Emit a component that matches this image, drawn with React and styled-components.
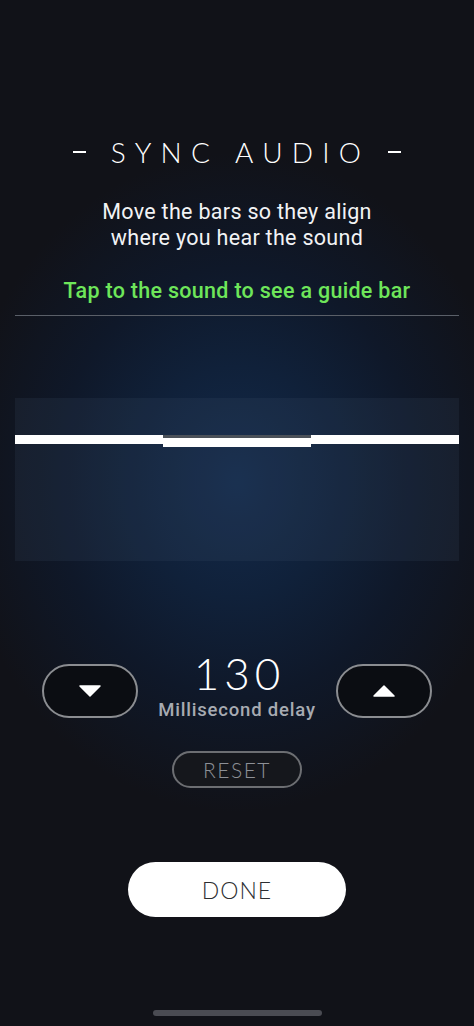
import styled, { createGlobalStyle } from 'styled-components'

const GlobalStyle = createGlobalStyle`
    html, body {
        margin: 0;
        padding: 0;
        background: #111218;
    }
    #root {
        min-height: 1026px;
    }
`

const Screen = styled.div`
    width: 474px;
    height: 1026px;
    display: flex;
    flex-direction: column;
    align-items: center;
    box-sizing: border-box;
    padding-top: 135px;
    background:
        radial-gradient(ellipse 280px 330px at 50% 47%, #132a4b 0%, #10213a 35%, #0f1829 65%, #111218 100%);
    overflow: hidden;
`
const Title = styled.h1`
    margin: 0;
    font-family: Lato, "Liberation Sans", sans-serif;
    font-weight: 300;
    font-size: 28px;
    line-height: 34px;
    letter-spacing: 0.33em;
    color: #ffffff;
    display: flex;
    align-items: center;
`
const Dash = styled.span`
    display: inline-block;
    width: 13px;
    height: 2px;
    background: #ffffff;
    margin-left: ${p => (p.$end ? '18px' : '0')};
    margin-right: ${p => (p.$end ? '0' : '25px')};
`
const Subtitle = styled.p`
    margin: 30px 0 0;
    font-family: Roboto, "Liberation Sans", sans-serif;
    font-size: 21.5px;
    line-height: 26px;
    color: #f2f3f5;
    text-align: center;
    letter-spacing: 0.3px;
`
const Hint = styled.p`
    margin: 27px 0 0;
    font-family: Roboto, "Liberation Sans", sans-serif;
    font-weight: 500;
    font-size: 21.5px;
    line-height: 26px;
    color: #6ee65a;
    letter-spacing: 0.3px;
`
const Divider = styled.div`
    width: 444px;
    height: 1px;
    margin-top: 11px;
    background: #5a5f68;
`
const Panel = styled.div`
    width: 444px;
    height: 163px;
    margin-top: 82px;
    box-sizing: border-box;
    padding-top: 37px;
    display: flex;
    align-items: flex-start;
    background: rgba(70, 90, 115, 0.16);
`
const Bar = styled.div`
    flex: 1;
    height: 9px;
    background: #ffffff;
    border-top: ${p => (p.$guide ? '3px solid #4b5159' : 'none')};
`
const Controls = styled.div`
    width: 390px;
    margin-top: 97px;
    display: flex;
    align-items: flex-start;
    justify-content: space-between;
`
const StepButton = styled.button`
    width: 96px;
    height: 54px;
    margin-top: 6px;
    border-radius: 27px;
    border: 2px solid #8b8d91;
    background: #0b0d12;
    display: flex;
    align-items: center;
    justify-content: center;
    padding: 0;
`
const Readout = styled.div`
    display: flex;
    flex-direction: column;
    align-items: center;
`
const Value = styled.div`
    margin-top: -5px;
    font-family: Lato, "Liberation Sans", sans-serif;
    font-weight: 300;
    font-size: 44px;
    line-height: 40px;
    letter-spacing: 5px;
    color: #ffffff;
    padding-left: 5px;
`
const Unit = styled.div`
    margin-top: 6px;
    font-family: Roboto, "Liberation Sans", sans-serif;
    font-weight: 500;
    font-size: 18.5px;
    line-height: 22px;
    letter-spacing: 0.8px;
    color: #a7abb2;
`
const ResetButton = styled.button`
    margin-top: 30px;
    width: 130px;
    height: 37px;
    border-radius: 19px;
    border: 2px solid #6c6e72;
    background: #15171c;
    font-family: Lato, "Liberation Sans", sans-serif;
    font-weight: 300;
    font-size: 21px;
    letter-spacing: 1.5px;
    color: #8d9096;
    padding: 0;
`
const DoneButton = styled.button`
    margin-top: 74px;
    width: 218px;
    height: 55px;
    border-radius: 28px;
    border: none;
    background: #ffffff;
    font-family: Lato, "Liberation Sans", sans-serif;
    font-weight: 300;
    font-size: 23px;
    letter-spacing: 1px;
    color: #2c2d31;
    padding: 0;
`
const HomeIndicator = styled.div`
    margin-top: 93px;
    width: 169px;
    height: 6px;
    border-radius: 3px;
    background: #4a4b52;
`

const Triangle = ({ up }) => (
    <svg width="22" height="12" viewBox="0 0 22 12">
        <path d={up ? 'M11 1 L21 11 L1 11 Z' : 'M1 1 L21 1 L11 11 Z'} fill="#ffffff" strokeLinejoin="round" stroke="#ffffff" strokeWidth="1.5" />
    </svg>
)

const App = () => {
    return (
        <>
            <GlobalStyle />
            <Screen>
                <Title><Dash />SYNC AUDIO<Dash $end /></Title>
                <Subtitle>Move the bars so they align<br />where you hear the sound</Subtitle>
                <Hint>Tap to the sound to see a guide bar</Hint>
                <Divider />
                <Panel>
                    <Bar />
                    <Bar $guide />
                    <Bar />
                </Panel>
                <Controls>
                    <StepButton><Triangle /></StepButton>
                    <Readout>
                        <Value>130</Value>
                        <Unit>Millisecond delay</Unit>
                    </Readout>
                    <StepButton><Triangle up /></StepButton>
                </Controls>
                <ResetButton>RESET</ResetButton>
                <DoneButton>DONE</DoneButton>
                <HomeIndicator />
            </Screen>
        </>
    )
}

export default App
